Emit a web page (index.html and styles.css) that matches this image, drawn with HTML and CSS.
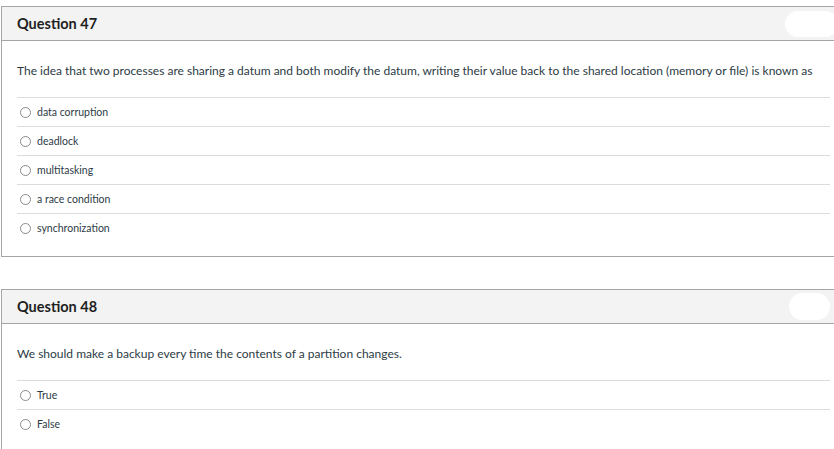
FILE: index.html
```html
<!DOCTYPE html>
<html lang="en">
<head>
    <meta charset="UTF-8">
    <title>Quiz</title>
    <link rel="stylesheet" href="styles.css">
</head>
<body>
    <div class="quiz">
        <div class="question">
            <div class="question-header">
                <h2>Question 47</h2>
                <span class="points points-wide"></span>
            </div>
            <div class="question-body">
                <p class="question-text">The idea that two processes are sharing a datum and both modify the datum, writing their value back to the shared location (memory or file) is known as</p>
                <div class="answers">
                    <label class="answer"><span class="radio"></span>data corruption</label>
                    <label class="answer"><span class="radio"></span>deadlock</label>
                    <label class="answer"><span class="radio"></span>multitasking</label>
                    <label class="answer"><span class="radio"></span>a race condition</label>
                    <label class="answer"><span class="radio"></span>synchronization</label>
                </div>
            </div>
        </div>

        <div class="question">
            <div class="question-header">
                <h2>Question 48</h2>
                <span class="points"></span>
            </div>
            <div class="question-body">
                <p class="question-text">We should make a backup every time the contents of a partition changes.</p>
                <div class="answers">
                    <label class="answer"><span class="radio"></span>True</label>
                    <label class="answer"><span class="radio"></span>False</label>
                </div>
            </div>
        </div>
    </div>
</body>
</html>
```

FILE: styles.css
```css
body {
    margin: 0;
    padding: 0;
    background-color: #fff;
    color: #2d3b45;
    font-family: Lato, "Liberation Sans", sans-serif;
    overflow: hidden;
}
.quiz {
    width: 845px;
    padding: 6px 0 0 1px;
}
.question {
    border: 1px solid #a5a5a5;
    margin-bottom: 32px;
}
.question-header {
    display: flex;
    align-items: center;
    height: 33px;
    padding: 0 15px;
    background-color: #f3f3f3;
    border-bottom: 1px solid #a5a5a5;
}
.question-header h2 {
    margin: 0;
    font-size: 14.5px;
    font-weight: bold;
    color: #1f1f1f;
}
.points {
    margin-left: auto;
    width: 41px;
    height: 27px;
    border-radius: 14px;
    background-color: #fff;
}
.points-wide {
    width: 53px;
    height: 26px;
    margin-right: -8px;
}
.question-body {
    padding: 21px 15px 14px 15px;
}
.question-text {
    margin: 0 0 18px 0;
    font-size: 12px;
    line-height: 17px;
}
.answer {
    display: flex;
    align-items: center;
    height: 28px;
    border-top: 1px solid #dcdcdc;
    font-size: 10.5px;
}
.radio {
    width: 9px;
    height: 9px;
    border: 1px solid #8a8a8a;
    border-radius: 50%;
    margin: 0 6px 0 3px;
}
```
